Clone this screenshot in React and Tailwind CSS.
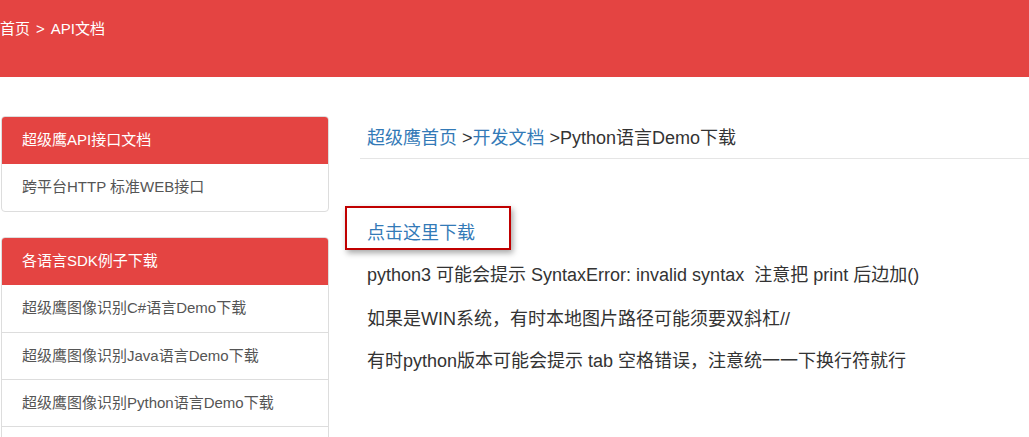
import React from 'react'

const FONT = "font-['Liberation_Sans','Noto_Sans_CJK_SC',sans-serif]"

function Card({ title, items }) {
  return (
    <div className="border border-[#dddddd] rounded-[4px] overflow-hidden">
      <div className="h-[47px] bg-[#e44442] px-[20px] flex items-center text-white text-[15px]">
        {title}
      </div>
      {items.map((item, i) => (
        <div
          key={i}
          className={`h-[47px] px-[20px] flex items-center text-[15px] text-[#555555] ${i > 0 ? 'border-t border-[#dddddd]' : ''}`}
        >
          {item}
        </div>
      ))}
    </div>
  )
}

export default function App() {
  return (
    <div className={`w-[1029px] h-[437px] overflow-hidden bg-white ${FONT}`}>
      <div className="h-[77px] bg-[#e44442] text-white text-[15px] leading-[20px] pt-[19px]">
        首页<span className="mx-[6px]">&gt;</span>API文档
      </div>

      <div className="flex pt-[39px] pl-[1px]">
        <div className="w-[328px] shrink-0 flex flex-col gap-[25px]">
          <Card title="超级鹰API接口文档" items={['跨平台HTTP 标准WEB接口']} />
          <Card
            title="各语言SDK例子下载"
            items={[
              '超级鹰图像识别C#语言Demo下载',
              '超级鹰图像识别Java语言Demo下载',
              '超级鹰图像识别Python语言Demo下载',
              '',
            ]}
          />
        </div>

        <div className="ml-[16px] flex-1">
          <div className="ml-[15px] h-[43px] pt-[9px] pl-[7px] leading-[26px] text-[18px] text-[#333333] border-b border-[#e5e5e5]">
            <span className="text-[#337ab7]">超级鹰首页</span>
            {' >'}
            <span className="text-[#337ab7]">开发文档</span>
            {' >Python语言Demo下载'}
          </div>

          <div className="mt-[47px] w-[166px] h-[44px] border-2 border-[#c00000] shadow-[2px_3px_6px_rgba(0,0,0,0.35)] pt-[12px] pl-[20px] text-[18px] leading-[26px] text-[#337ab7]">
            点击这里下载
          </div>

          <div className="pl-[22px] text-[18px] leading-[26px] text-[#333333]">
            <p className="mt-[12px]">python3 可能会提示 SyntaxError: invalid syntax&nbsp; 注意把 print 后边加()</p>
            <p className="mt-[18px]">如果是WIN系统，有时本地图片路径可能须要双斜杠//</p>
            <p className="mt-[16px]">有时python版本可能会提示 tab 空格错误，注意统一一下换行符就行</p>
          </div>
        </div>
      </div>
    </div>
  )
}
